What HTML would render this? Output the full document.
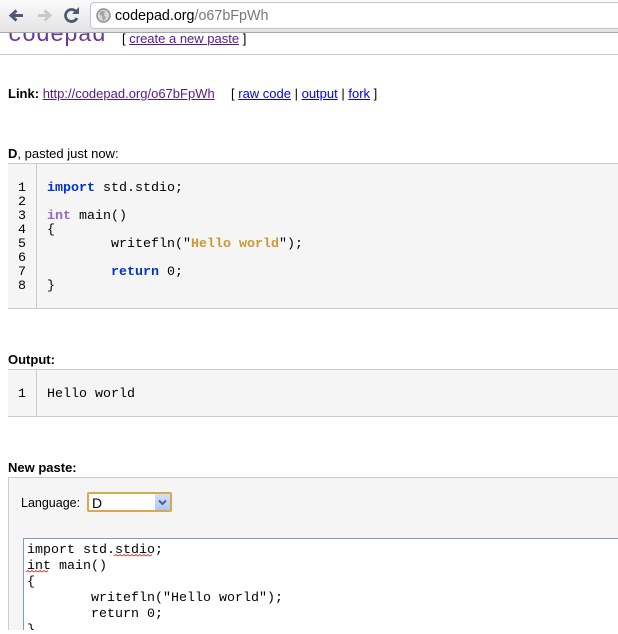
<!DOCTYPE html>
<html><head><meta charset="utf-8"><style>
html,body{margin:0;padding:0;background:#fff;width:618px;height:634px;overflow:hidden}
body{position:relative;font-family:"Liberation Sans",sans-serif;font-size:12px;color:#000}
.a{position:absolute;white-space:pre}
.m{font-family:"Liberation Mono",monospace;font-size:13.33px;line-height:14px}
.t{font-size:13px;line-height:14px}
u{text-decoration:underline}
.v{color:#551a8b}.l{color:#00e}
.box{position:absolute;left:8px;width:610px;background:#f5f5f5;border-top:1px solid #ccc;border-bottom:1px solid #ccc;box-sizing:border-box}
.sep{position:absolute;left:36px;width:1px;background:#ccc}
.k{color:#0033cc;font-weight:bold}.p{color:#9966cc;font-weight:bold}.s{color:#cc9933;font-weight:bold}
</style></head><body>
<div class="a" style="left:0;top:0;width:618px;height:33px;background:linear-gradient(#fafafa,#e4e4e4);border-bottom:1px solid #a8a8a8;box-sizing:border-box"></div>
<svg class="a" style="left:0;top:0" width="90" height="32">
<path d="M23 15.5H12M16.5 10.5L11 15.5L16.5 20.5" fill="none" stroke="#4d5a73" stroke-width="3"/>
<path d="M38 15.5H49M44.500 10.500L50 15.500L44.500 20.500" fill="none" stroke="#c6cad0" stroke-width="3"/>
<path d="M77 18A6 6 0 1 1 76 11.500" fill="none" stroke="#4d5a73" stroke-width="2.800"/>
<path d="M72 14H79V7Z" fill="#4d5a73"/>
</svg>
<div class="a" style="left:90px;top:2px;width:540px;height:27px;background:#fff;border:1px solid #c4c4cc;border-radius:4px;box-sizing:border-box"></div>
<svg class="a" style="left:96px;top:8px" width="16" height="16"><circle cx="7.500" cy="7.500" r="6.500" fill="#d8d8d8" stroke="#8e8e8e" stroke-width="1.500"/><path d="M5 3L9 3L8 7L10 10L7 13L6 8L3 6Z" fill="#a5a5a5"/></svg>
<div class="a" style="left:115px;top:7px;font-size:14.300px;line-height:18px;color:#000">codepad.org<span style="color:#777">/o67bFpWh</span></div>

<div class="a" style="left:0;top:33px;width:618px;height:22px;overflow:hidden"><div class="a" style="left:8px;top:-12px;font-family:'Liberation Mono',monospace;font-size:23.300px;line-height:28px;color:#6a3a9b">codepad</div><div class="a t" style="left:122px;top:-1px">[ <u class="v">create a new paste</u> ]</div></div>
<div class="a" style="left:0;top:54px;width:618px;height:1px;background:#ccc"></div>

<div class="a t" style="left:8px;top:87px"><b>Link:</b> <u class="v">http://codepad.org/o67bFpWh</u></div>
<div class="a t" style="left:231px;top:87px">[ <u class="l">raw code</u> | <u class="l">output</u> | <u class="l">fork</u> ]</div>

<div class="a t" style="left:8px;top:147px"><b>D</b>, pasted just now:</div>
<div class="box" style="top:163px;height:146px"></div>
<div class="sep" style="top:164px;height:144px"></div>
<div class="a m" style="left:18px;top:182px">1
2
3
4
5
6
7
8</div>
<div class="a m" style="left:47px;top:182px"><span class="k">import</span> std.stdio;

<span class="p">int</span> main()
{
        writefln(&quot;<span class="s">Hello world</span>&quot;);

        <span class="k">return</span> 0;
}</div>

<div class="a t" style="left:8px;top:353px"><b>Output:</b></div>
<div class="box" style="top:369px;height:48px"></div>
<div class="sep" style="top:370px;height:46px"></div>
<div class="a m" style="left:18px;top:388px">1</div>
<div class="a m" style="left:47px;top:388px">Hello world</div>

<div class="a t" style="left:8px;top:461px"><b>New paste:</b></div>
<div class="box" style="top:477px;height:170px;border-left:1px solid #ccc"></div>
<div class="a t" style="left:21px;top:496px;font-size:12.500px">Language:</div>
<div class="a" style="left:87px;top:492px;width:85px;height:20px;background:#fff;border:2px solid #d9a94f;border-radius:2px;box-sizing:border-box"></div>
<div class="a t" style="left:92px;top:496px;font-size:14px">D</div>
<div class="a" style="left:155px;top:494px;width:15px;height:16px;background:linear-gradient(#d4e0fb,#aec6f5)"></div>
<svg class="a" style="left:155px;top:494px" width="15" height="16"><path d="M4 6.500L7.500 10L11 6.500" fill="none" stroke="#4d6185" stroke-width="2"/></svg>

<div class="a" style="left:23px;top:538px;width:600px;height:110px;background:#fff;border:1px solid #7f9db9;box-sizing:border-box"></div>
<div class="a m" style="left:27px;top:543px;line-height:16px">import std.stdio;
int main()
{
        writefln(&quot;Hello world&quot;);
        return 0;
}</div>
<svg class="a" style="left:0;top:0" width="200" height="634"><path d="M114 556l2-1.500 2 1.500 2-1.500 2 1.500 2-1.500 2 1.500 2-1.500 2 1.500 2-1.500 2 1.500 2-1.500 2 1.500 2-1.500 2 1.500 2-1.500 2 1.500 2-1.500 2 1.500 2-1.500M26 572l2-1.500 2 1.500 2-1.500 2 1.500 2-1.500 2 1.500 2-1.500 2 1.500 2-1.500 2 1.500 2-1.500" fill="none" stroke="#e03030" stroke-width=".8"/></svg>
<div class="a" style="left:0;top:630px;width:618px;height:4px;background:#fff"></div>
</body></html>
